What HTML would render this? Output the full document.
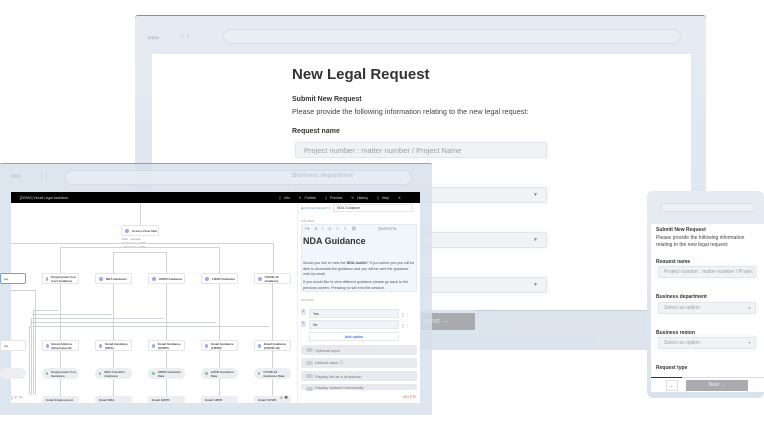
<!DOCTYPE html>
<html><head><meta charset="utf-8"><style>
*{box-sizing:border-box;margin:0;padding:0}
body{width:764px;height:430px;overflow:hidden;background:#fff;font-family:"Liberation Sans",sans-serif;position:relative;color:#333}
.a{position:absolute}
.inp{position:absolute;background:#f1f2f4;border:1px solid #e3e5e8;box-shadow:0 0 0 3px #fafbfc;border-radius:2px;font-size:7.5px;color:#9a9ea6;padding-left:8px;display:flex;align-items:center}
.car{position:absolute;right:8px;top:50%;transform:translateY(-50%);font-size:5px;color:#888}
.node{position:absolute;background:#fff;border:1px solid #e2e4e8;border-radius:2px;font-size:3px;font-weight:bold;color:#444;display:flex;align-items:center;padding-left:3px;gap:3px}
.node i{width:4px;height:4px;border-radius:50%;background:#8fb0f0;display:inline-block}
.pill{position:absolute;background:#eceef1;border-radius:5px;font-size:3px;font-weight:bold;color:#555;display:flex;align-items:center;padding-left:4px;gap:3px}
.pill i{width:3px;height:3px;border-radius:50%;background:#7cc79a;display:inline-block}
.vl{position:absolute;width:1px;background:#cfd2d7}
.hl{position:absolute;height:1px;background:#cfd2d7}
.tg{position:absolute;left:301px;width:116px;height:10px;background:#e9eaed;border-radius:2px;font-size:4px;color:#777;display:flex;align-items:center;padding-left:14px}
.tg:before{content:"";position:absolute;left:5px;top:3px;width:7px;height:4px;border-radius:2px;background:#c9ccd1}
</style></head><body>

<!-- big browser frame -->
<div class="a" style="left:135px;top:15px;width:571px;height:335px;background:linear-gradient(#e6ebf3,#dbe3ee);border-radius:3px;border-top:1px solid #8a8f96"></div>
<div class="a" style="left:147px;top:33px;font-size:8px;color:#c8d0db;letter-spacing:-1px">●●●</div>
<div class="a" style="left:181px;top:31px;font-size:9px;color:#c8d0db">‹ ›</div>
<div class="a" style="left:223px;top:29px;width:458px;height:15px;border-radius:8px;background:#e9eef5;border:1px solid #d6dde7"></div>
<div class="a" style="left:152px;top:54px;width:539px;height:256px;background:#fff"></div>
<div class="a" style="left:292px;top:66px;font-size:15px;font-weight:bold;color:#333">New Legal Request</div>
<div class="a" style="left:292px;top:96px;font-size:7px;font-weight:bold;color:#333">Submit New Request</div>
<div class="a" style="left:292px;top:107px;font-size:7.3px;color:#444">Please provide the following information relating to the new legal request:</div>
<div class="a" style="left:292px;top:128px;font-size:7px;font-weight:bold;color:#333">Request name</div>
<div class="inp" style="left:295px;top:142px;width:252px;height:16px">Project number : matter number / Project Name</div>
<div class="inp" style="left:295px;top:187px;width:252px;height:16px"><span class="car">▼</span></div>
<div class="inp" style="left:295px;top:232px;width:252px;height:16px"><span class="car">▼</span></div>
<div class="inp" style="left:295px;top:277px;width:252px;height:16px"><span class="car">▼</span></div>
<div class="a" style="left:421px;top:313px;width:54px;height:17px;background:#a9abae;color:#e8e8e8;font-size:7px;display:flex;align-items:center;padding-left:4px">Next →</div>
<div class="hl" style="left:475px;top:310px;width:175px;background:#c7ced8"></div>

<!-- laptop frame -->
<div class="a" style="left:0;top:163px;width:432px;height:252px;background:rgba(214,223,235,0.82);border-radius:2px;border-top:1px solid #9aa0a8"></div>
<div class="a" style="left:10px;top:173px;font-size:7px;color:#c6cfdb;letter-spacing:-1px">●●●</div>
<div class="a" style="left:40px;top:171px;font-size:8px;color:#c6cfdb">‹ ›</div>
<div class="a" style="left:65px;top:170px;width:347px;height:15px;border-radius:8px;background:rgba(233,238,245,0.8);border:1px solid #d3dbe6"></div>
<div class="a" style="left:292px;top:173px;font-size:6px;font-weight:bold;color:#c2cad6">Business department</div>
<div class="a" style="left:11px;top:192px;width:409px;height:211px;background:#fff"></div>
<div class="a" style="left:11px;top:192px;width:409px;height:11px;background:#000;color:#ccc;font-size:3.5px;display:flex;align-items:center;padding-left:9px">[DEMO] Virtual Legal Assistant
<span style="position:absolute;left:268px;word-spacing:2px">▯ Info &nbsp; ✎ Publish &nbsp; ▯ Preview &nbsp; ↻ History &nbsp; ▯ Help &nbsp; ✕</span></div>

<!-- flow canvas -->
<div class="vl" style="left:140px;top:203px;height:22px"></div>
<div class="node" style="left:121px;top:225px;width:38px;height:11px"><i></i>Access Flow Item</div>
<div class="a" style="left:121px;top:238px;font-size:2.5px;color:#888;line-height:4px">‹ NDA &nbsp; › General<br>‹ Employment ‹ GDPR<br>‹ with Holiday ‹ GDPR</div>
<div class="hl" style="left:11px;top:243px;width:263px"></div>
<div class="hl" style="left:60px;top:247px;width:160px"></div>
<div class="hl" style="left:113px;top:252px;width:54px"></div>
<div class="vl" style="left:273px;top:243px;height:30px"></div>
<div class="vl" style="left:60px;top:247px;height:26px"></div>
<div class="vl" style="left:219px;top:247px;height:26px"></div>
<div class="vl" style="left:113px;top:252px;height:21px"></div>
<div class="vl" style="left:166px;top:252px;height:21px"></div>

<div class="node" style="left:0;top:273px;width:26px;height:11px;border-color:#6f9de8">on</div>
<div class="node" style="left:42px;top:273px;width:37px;height:11px"><i></i>Employment Con. tract Guidance</div>
<div class="node" style="left:95px;top:273px;width:37px;height:11px"><i></i>NDA Guidance</div>
<div class="node" style="left:148px;top:273px;width:37px;height:11px"><i></i>GDPR Guidance</div>
<div class="node" style="left:201px;top:273px;width:37px;height:11px"><i></i>LMVR Guidance</div>
<div class="node" style="left:254px;top:273px;width:37px;height:11px"><i></i>COVID-19 Guidance</div>
<div class="vl" style="left:60px;top:284px;height:56px"></div>
<div class="vl" style="left:113px;top:284px;height:56px"></div>
<div class="vl" style="left:166px;top:284px;height:56px"></div>
<div class="vl" style="left:219px;top:284px;height:56px"></div>
<div class="vl" style="left:272px;top:284px;height:56px"></div>
<div class="hl" style="left:11px;top:290px;width:24px"></div>
<div class="vl" style="left:35px;top:290px;height:113px"></div>
<div class="hl" style="left:33px;top:310px;width:25px"></div>
<div class="hl" style="left:32px;top:314px;width:80px"></div>
<div class="hl" style="left:31px;top:318px;width:133px"></div>
<div class="hl" style="left:30px;top:322px;width:186px"></div>
<div class="hl" style="left:29px;top:326px;width:240px"></div>
<div class="vl" style="left:33px;top:310px;height:93px"></div>
<div class="vl" style="left:31px;top:318px;height:85px"></div>
<div class="vl" style="left:29px;top:326px;height:77px"></div>

<div class="node" style="left:0;top:340px;width:26px;height:11px">on</div>
<div class="node" style="left:42px;top:340px;width:37px;height:11px"><i></i>Email Address (Employment)</div>
<div class="node" style="left:95px;top:340px;width:37px;height:11px"><i></i>Email Guidance (NDA)</div>
<div class="node" style="left:148px;top:340px;width:37px;height:11px"><i></i>Email Guidance (GDPR)</div>
<div class="node" style="left:201px;top:340px;width:37px;height:11px"><i></i>Email Guidance (LMVR)</div>
<div class="node" style="left:254px;top:340px;width:37px;height:11px"><i></i>Email Guidance (COVID-19)</div>
<div class="vl" style="left:60px;top:351px;height:52px"></div>
<div class="vl" style="left:113px;top:351px;height:52px"></div>
<div class="vl" style="left:166px;top:351px;height:52px"></div>
<div class="vl" style="left:219px;top:351px;height:52px"></div>
<div class="vl" style="left:272px;top:351px;height:52px"></div>
<div class="pill" style="left:0;top:368px;width:26px;height:11px"></div>
<div class="pill" style="left:42px;top:368px;width:37px;height:11px"><i></i>Employment Con. Guidance</div>
<div class="pill" style="left:95px;top:368px;width:37px;height:11px"><i></i>NDA Checklist Guidance</div>
<div class="pill" style="left:148px;top:368px;width:37px;height:11px"><i></i>GDPR Guidance Data</div>
<div class="pill" style="left:201px;top:368px;width:37px;height:11px"><i></i>LMVR Guidance Data</div>
<div class="pill" style="left:254px;top:368px;width:37px;height:11px"><i></i>COVID-19 Guidance Data</div>
<div class="pill" style="left:42px;top:396px;width:37px;height:7px;border-radius:2px">Email Employment</div>
<div class="pill" style="left:95px;top:396px;width:37px;height:7px;border-radius:2px">Email NDA</div>
<div class="pill" style="left:148px;top:396px;width:37px;height:7px;border-radius:2px">Email GDPR</div>
<div class="pill" style="left:201px;top:396px;width:37px;height:7px;border-radius:2px">Email LMVR</div>
<div class="pill" style="left:254px;top:396px;width:37px;height:7px;border-radius:2px">Email COVID</div>
<div class="a" style="left:11px;top:395px;width:28px;height:8px;background:#fff;font-size:4px;color:#888">▯ ↶ ↷</div>
<div class="a" style="left:280px;top:395px;font-size:5px;color:#555">⌕ ✱</div>

<!-- right panel -->
<div class="a" style="left:297px;top:203px;width:123px;height:200px;background:#fff;border-left:1px solid #eee"></div>
<div class="a" style="left:301px;top:206px;font-size:3px;color:#6c93e6">◉ SINGLE SELECT ▾</div>
<div class="a" style="left:333px;top:204px;width:80px;height:8px;border:1px solid #e6e6e6;font-size:3.5px;padding:1px 3px;color:#444">NDA Guidance</div>
<div class="a" style="left:301px;top:219px;font-size:2.8px;color:#999">CONTENT</div>
<div class="a" style="left:301px;top:224px;width:116px;height:68px;background:#f1f5fc;border:1px solid #e6ebf3"></div>
<div class="a" style="left:304px;top:226px;font-size:4px;color:#888;word-spacing:4px">↗▾ B I U ≡ ≡ ⛓ <span style="margin-left:16px">▯INSERT▾</span></div>
<div class="a" style="left:303px;top:236px;font-size:9px;font-weight:bold;color:#333">NDA Guidance</div>
<div class="a" style="left:303px;top:261px;width:112px;font-size:3.7px;line-height:5.6px;color:#555">Would you like to view the <b>NDA toolkit</b>? If you select yes you will be able to download the guidance and you will be sent the guidance note by email.</div>
<div class="a" style="left:303px;top:280px;width:112px;font-size:3.7px;line-height:5.6px;color:#555">If you would like to view different guidance please go back to the previous screen. Pressing no will end this session.</div>
<div class="a" style="left:301px;top:298px;font-size:2.8px;color:#999">OPTIONS</div>
<div class="a" style="left:301px;top:309px;width:5px;height:6px;background:#dbe6fb;font-size:3.5px;color:#5b86e5;text-align:center">1</div>
<div class="a" style="left:309px;top:309px;width:90px;height:9px;background:#f1f3f6;border:1px solid #e6e8eb;font-size:3.5px;padding:2px 3px">Yes</div>
<div class="a" style="left:301px;top:321px;width:5px;height:6px;background:#dbe6fb;font-size:3.5px;color:#5b86e5;text-align:center">2</div>
<div class="a" style="left:309px;top:320px;width:90px;height:9px;background:#f1f3f6;border:1px solid #e6e8eb;font-size:3.5px;padding:2px 3px">No</div>
<div class="a" style="left:402px;top:309px;font-size:4px;color:#999;line-height:11px">▯ ⋮<br>▯ ⋮</div>
<div class="a" style="left:309px;top:332px;width:90px;height:9px;border:1px solid #e6e8eb;font-size:3.5px;color:#4a78e0;font-weight:bold;text-align:center;padding-top:2px">Add option</div>
<div class="tg" style="top:345px">Optional input</div>
<div class="tg" style="top:358px">Default value ⓘ</div>
<div class="tg" style="top:371px">Display list as a dropdown</div>
<div class="tg" style="top:384px;height:6px">Display options horizontally</div>
<div class="a" style="left:403px;top:395px;font-size:3.5px;color:#e05a5a">DELETE</div>

<!-- phone -->
<div class="a" style="left:647px;top:191px;width:117px;height:207px;background:linear-gradient(#e6ebf3,#dbe3ee);border-radius:6px"></div>
<div class="a" style="left:660px;top:203px;width:95px;height:9px;border-radius:5px;background:#edf1f6;border:1px solid #d8dfe8"></div>
<div class="a" style="left:651px;top:224px;width:113px;height:168px;background:#fff"></div>
<div class="a" style="left:656px;top:227px;font-size:5px;font-weight:bold">Submit New Request</div>
<div class="a" style="left:656px;top:235px;width:104px;font-size:5px;line-height:6.5px;color:#444">Please provide the following information relating to the new legal request:</div>
<div class="a" style="left:656px;top:259px;font-size:5px;font-weight:bold">Request name</div>
<div class="inp" style="left:658px;top:266px;width:98px;height:12px;font-size:5px;padding-left:5px;white-space:nowrap;overflow:hidden">Project number : matter number / Projec</div>
<div class="a" style="left:656px;top:294px;font-size:5px;font-weight:bold">Business department</div>
<div class="inp" style="left:658px;top:302px;width:98px;height:12px;font-size:5px;padding-left:5px">Select an option<span class="car" style="right:4px;font-size:3px">▼</span></div>
<div class="a" style="left:656px;top:330px;font-size:5px;font-weight:bold">Business region</div>
<div class="inp" style="left:658px;top:337px;width:98px;height:12px;font-size:5px;padding-left:5px">Select an option<span class="car" style="right:4px;font-size:3px">▼</span></div>
<div class="a" style="left:656px;top:365px;font-size:5px;font-weight:bold">Request type</div>
<div class="hl" style="left:651px;top:377px;width:113px;background:#ddd"></div>
<div class="hl" style="left:651px;top:377px;width:31px;background:#333"></div>
<div class="a" style="left:666px;top:380px;width:12px;height:11px;border:1px solid #ddd;font-size:5px;text-align:center;padding-top:2px">←</div>
<div class="a" style="left:686px;top:380px;width:62px;height:11px;background:#a9abae;color:#eee;font-size:5px;text-align:center;padding-top:2px">Next →</div>
<div class="a" style="left:596px;top:335px;width:51px;height:15px;background:#dde4ee"></div>
</body></html>
